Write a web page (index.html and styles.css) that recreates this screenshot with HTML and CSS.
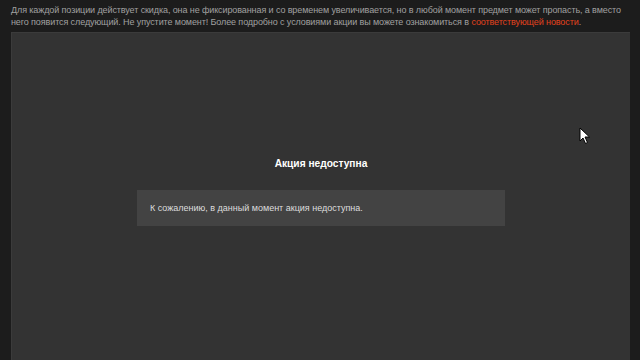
FILE: index.html
```html
<!DOCTYPE html>
<html>
<head>
	<meta charset="UTF-8">
	<title>Акция недоступна</title>
<link rel="stylesheet" href="styles.css">
</head>
<body>
<div id="page">
	<p class="intro">Для каждой позиции действует скидка, она не фиксированная и со временем увеличивается, но в любой момент предмет может пропасть, а вместо него появится следующий. Не упустите момент! Более подробно с условиями акции вы можете ознакомиться в <a href="#">соответствующей новости</a>.</p>
	<div id="panel">
		<h2 class="title">Акция недоступна</h2>
		<div class="notice">К сожалению, в данный момент акция недоступна.</div>
	</div>
</div>
<svg class="cursor" width="12" height="18" viewBox="0 0 12 18"><path d="M1 1 L1 14 L4 11 L6.5 16.5 L8.5 15.5 L6 10 L10.5 10 Z" fill="#fff" stroke="#000" stroke-width="1"/></svg>
</body>
</html>
```

FILE: styles.css
```css
html{font:9px "Liberation Sans",Arial,sans-serif;}
body{margin:0;background:#1c1c1c;height:360px;overflow:hidden;}
#page{padding:0 10px 0 11px;}
.intro{margin:0;padding:4px 8px 0 0;line-height:12px;letter-spacing:-0.1px;color:#a0a0a0;}
.intro a{color:#e2421c;text-decoration:none;}
#panel{margin-top:4px;height:328px;box-sizing:border-box;padding-top:124px;background:#333;border-left:1px solid #3b3b3b;border-top:1px solid #3b3b3b;}
.title{margin:0 0 19px;font-size:10.2px;line-height:14px;font-weight:bold;color:#fff;text-align:center;}
.notice{margin:0 auto;width:355px;height:36px;padding-left:13px;line-height:36px;background:#434343;color:#ddd;font-size:9px;}
.cursor{position:absolute;left:579px;top:127px;}
```
